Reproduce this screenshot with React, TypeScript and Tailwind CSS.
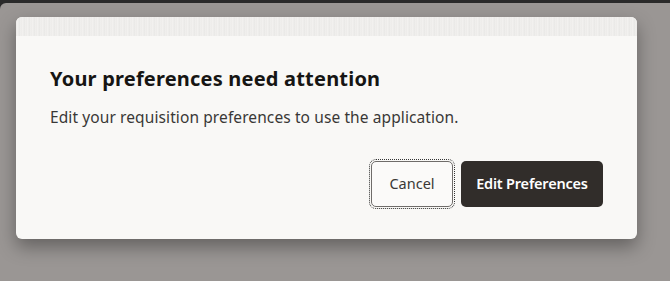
export default function App() {
  return (
    <div className="w-[670px] h-[281px] bg-[#2a2a2a] pt-[3px] overflow-hidden" style={{ fontFamily: '"Noto Sans", "Open Sans", sans-serif' }}>
      <div className="h-full bg-[#9a9694] rounded-tl-[6px] pt-[14px] pl-[16px]">
        <div className="w-[621px] h-[222px] bg-[#f9f8f6] rounded-[6px] shadow-[0_8px_18px_rgba(0,0,0,0.35)] overflow-hidden flex flex-col">
          <div className="h-[19px] bg-[repeating-linear-gradient(90deg,#eceae8_0px,#f4f3f1_2px,#e8e7e5_3px,#f2f1ef_5px)]" />
          <div className="px-[34px] pt-[30px]">
            <h2 className="text-[20px] leading-[25px] font-bold text-[#161513] tracking-[0.2px]">
              Your preferences need attention
            </h2>
            <p className="mt-[16px] text-[15.5px] leading-[20px] text-[#3a3836] tracking-[0.1px]">
              Edit your requisition preferences to use the application.
            </p>
          </div>
          <div className="flex justify-end gap-[8px] pr-[34px] mt-[34px]">
            <button className="w-[82px] h-[46px] rounded-[5px] border border-[#6f6c6a] outline outline-1 outline-dotted outline-offset-[1px] outline-[#333] bg-[#fbfaf9] text-[14.5px] text-[#3a3836]">
              Cancel
            </button>
            <button className="w-[142px] h-[46px] rounded-[5px] bg-[#312d2a] text-[14.5px] font-semibold text-white tracking-[-0.2px]">
              Edit Preferences
            </button>
          </div>
        </div>
      </div>
    </div>
  );
}
